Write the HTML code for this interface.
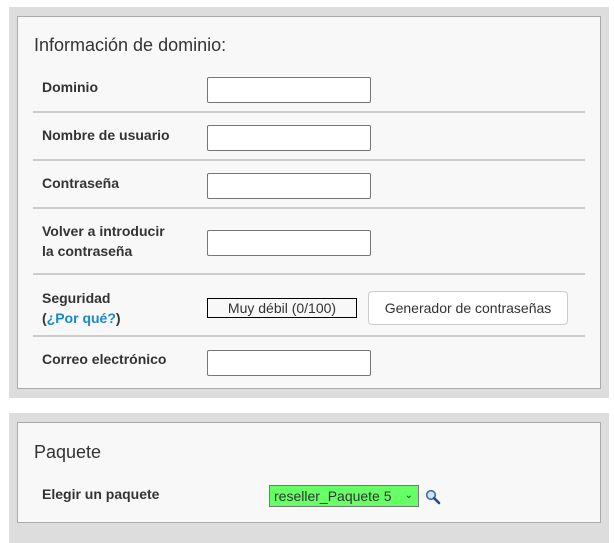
<!DOCTYPE html>
<html><head><style>
body{margin:0;background:#fff;font-family:"Liberation Sans",sans-serif;width:614px;height:530px;overflow:hidden;position:relative;color:#333}
.outer{position:absolute;left:9px;width:600px;background:#ddd}
.inner{position:absolute;left:8px;right:8px;top:9px;background:#f8f8f8;border:1px solid #aaa}
.t{position:absolute;left:16px;font-size:18px;color:#333}
.l{position:absolute;left:24px;font-size:14px;font-weight:bold;color:#333;line-height:20px}
.i{position:absolute;left:189px;width:162px;height:24px;border:1px solid #767676;border-radius:2px;background:#fff}
.sep{position:absolute;left:15px;right:15px;height:2px;background:#ccc}
</style></head><body>
<div class="outer" style="top:7px;height:391px">
 <div class="inner" style="height:371px">
  <div class="t" style="top:18px">Información de dominio:</div>
  <div class="l" style="top:60px">Dominio</div><div class="i" style="top:60px"></div>
  <div class="sep" style="top:94px"></div>
  <div class="l" style="top:108px">Nombre de usuario</div><div class="i" style="top:108px"></div>
  <div class="sep" style="top:142px"></div>
  <div class="l" style="top:156px">Contraseña</div><div class="i" style="top:156px"></div>
  <div class="sep" style="top:190px"></div>
  <div class="l" style="top:204px">Volver a introducir<br>la contraseña</div><div class="i" style="top:213px"></div>
  <div class="sep" style="top:256px"></div>
  <div class="l" style="top:271px">Seguridad<br>(<span style="color:#1a88c9">¿Por qué?</span>)</div>
  <div style="position:absolute;left:189px;top:281px;width:148px;height:18px;border:1px solid #000;background:#f8f8f8;font-size:14px;text-align:center;line-height:18px">Muy débil (0/100)</div>
  <div style="position:absolute;left:350px;top:274px;width:198px;height:32px;border:1px solid #ccc;border-radius:4px;background:#fff;font-size:14px;text-align:center;line-height:32px">Generador de contraseñas</div>
  <div class="sep" style="top:318px"></div>
  <div class="l" style="top:332px">Correo electrónico</div><div class="i" style="top:333px"></div>
 </div>
</div>
<div class="outer" style="top:413px;height:130px">
 <div class="inner" style="height:99px">
  <div class="t" style="top:19px">Paquete</div>
  <div class="l" style="top:61px">Elegir un paquete</div>
  <div style="position:absolute;left:251px;top:62px;font-size:14px;line-height:20px;padding-left:4px;box-sizing:border-box;width:150px;height:22px;border:1px solid #767676;background:#66ff66">reseller_Paquete 5<span style="position:absolute;right:5px;font-size:10px">&#8964;</span></div>
  <svg style="position:absolute;left:407px;top:66px" width="16" height="16" viewBox="0 0 16 16"><circle cx="6" cy="6" r="4.3" fill="#cfe6f7" stroke="#3a6ea5" stroke-width="1.6"/><path d="M9 9l5 5" stroke="#1f4f82" stroke-width="2.6" stroke-linecap="round"/></svg>
 </div>
</div>
</body></html>
